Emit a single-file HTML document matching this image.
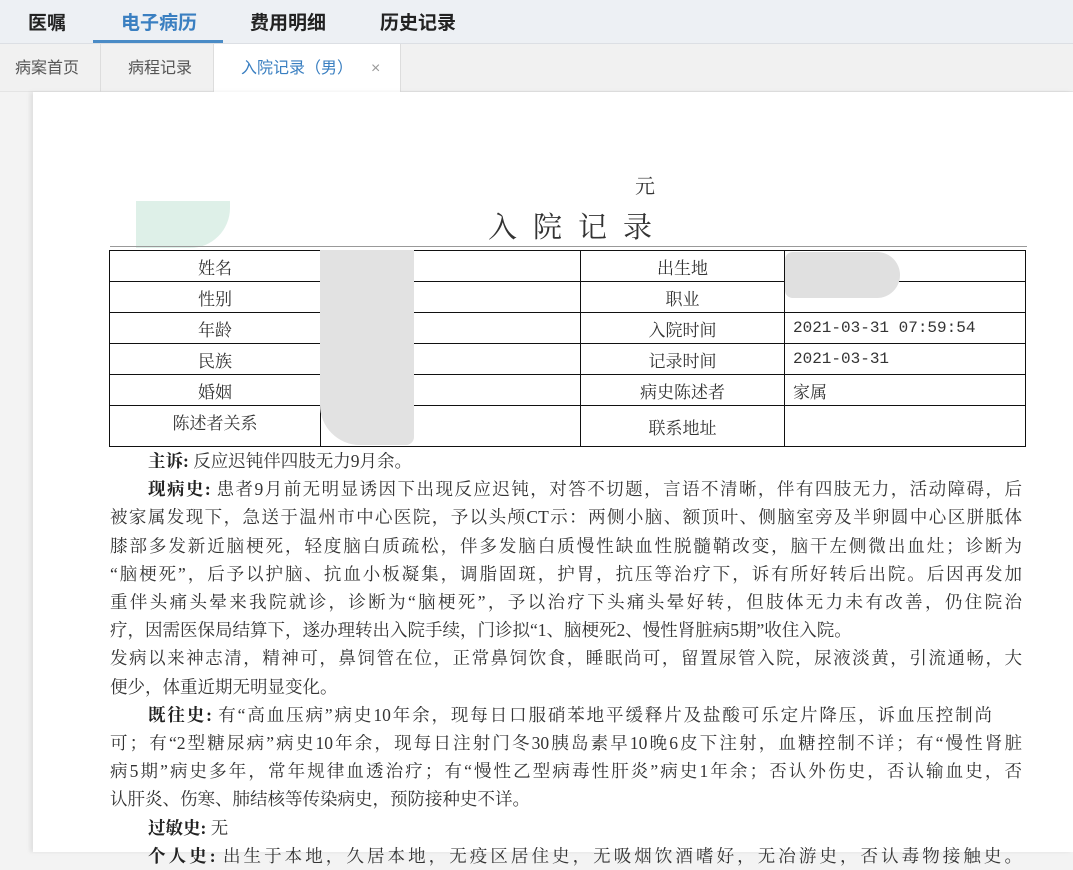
<!DOCTYPE html>
<html><head><meta charset="utf-8"><style>
*{margin:0;padding:0;box-sizing:border-box}
body{width:1073px;height:845px;overflow:hidden;background:#f3f3f3;position:relative;font-family:"Liberation Serif","Noto Serif CJK SC",serif;}
.nav{position:absolute;left:0;top:0;width:1073px;height:44px;background:#edf0f4;border-bottom:1px solid #dcdfe4;font-family:"Liberation Sans","Noto Sans CJK SC",sans-serif;}
.nav span{position:absolute;top:8px;font-size:19px;font-weight:bold;color:#222}
.nav .act{color:#3a7fc1}
.uline{position:absolute;left:93px;top:40px;width:130px;height:3px;background:#4a8bc6}
.tabs{position:absolute;left:0;top:44px;width:1073px;height:48px;background:#f1f1f1;border-bottom:1px solid #e4e4e4;font-family:"Liberation Sans","Noto Sans CJK SC",sans-serif;font-size:16px;color:#555}
.tab{position:absolute;top:0;height:48px;line-height:50px;border-right:1px solid #ddd}
.page{position:absolute;left:33px;top:92px;width:1040px;height:760px;background:#fff;box-shadow:-3px 0 4px rgba(0,0,0,.08)}
table{position:absolute;left:109px;top:250px;border-collapse:collapse;font-size:17px;color:#333}
td{border:1.5px solid #111;height:31px;padding:0}
.c{text-align:center}
.v{padding-left:8px;font-family:"Liberation Mono","Noto Serif CJK SC",monospace;font-size:16px}
.txt{position:absolute;left:110px;width:912px;font-size:17.5px;color:#333;line-height:28.2px}
.txt div{text-align:justify;text-align-last:justify;white-space:nowrap;}
.txt div.l{text-align-last:left}
b{color:#222}
</style></head><body>
<div class="nav"><span style="left:28px">医嘱</span><span class="act" style="left:121px">电子病历</span><span style="left:250px">费用明细</span><span style="left:380px">历史记录</span><div class="uline"></div></div>
<div class="tabs">
<div class="tab" style="left:0;width:101px;padding-left:15px">病案首页</div>
<div class="tab" style="left:101px;width:113px;padding-left:27px">病程记录</div>
<div class="tab" style="left:214px;width:187px;padding-left:27px;background:#fff;color:#3a7fc1">入院记录（男）<span style="color:#999;margin-left:18px">×</span></div>
</div>
<div class="page"></div>
<div style="position:absolute;left:136px;top:201px;width:94px;height:47px;background:#d6ece2;border-radius:0 0 40px 0;opacity:.8"></div>
<div style="position:absolute;left:635px;top:170px;font-size:20px;color:#333">元</div>
<div style="position:absolute;left:488px;top:205px;font-size:29px;letter-spacing:16px;color:#333">入院记录</div>
<div style="position:absolute;left:110px;top:246px;width:917px;height:1px;background:#999"></div>
<table>
<tr><td class="c" style="width:211px">姓名</td><td style="width:260px"></td><td class="c" style="width:204px">出生地</td><td style="width:241px"></td></tr>
<tr><td class="c">性别</td><td></td><td class="c">职业</td><td class="v"></td></tr>
<tr><td class="c">年龄</td><td></td><td class="c">入院时间</td><td class="v">2021-03-31 07:59:54</td></tr>
<tr><td class="c">民族</td><td></td><td class="c">记录时间</td><td class="v">2021-03-31</td></tr>
<tr><td class="c">婚姻</td><td></td><td class="c">病史陈述者</td><td class="v" style="font-family:'Liberation Serif','Noto Serif CJK SC',serif;font-size:17px">家属</td></tr>
<tr><td class="c" style="height:41px;vertical-align:top;padding-top:3px">陈述者关系</td><td></td><td class="c">联系地址</td><td></td></tr>
</table>
<div style="position:absolute;left:320px;top:250px;width:94px;height:195px;background:#e2e2e2;border-radius:0 0 8px 40px"></div>
<div style="position:absolute;left:785px;top:252px;width:115px;height:46px;background:#e0e0e0;border-radius:10px 30px 30px 10px"></div>
<div class="txt" style="top:447px">
<div class="l" style="padding-left:38px"><b>主诉:</b> 反应迟钝伴四肢无力9月余。</div>
<div style="padding-left:38px"><b>现病史:</b> 患者9月前无明显诱因下出现反应迟钝，对答不切题，言语不清晰，伴有四肢无力，活动障碍，后</div>
<div>被家属发现下，急送于温州市中心医院，予以头颅CT示：两侧小脑、额顶叶、侧脑室旁及半卵圆中心区胼胝体</div>
<div>膝部多发新近脑梗死，轻度脑白质疏松，伴多发脑白质慢性缺血性脱髓鞘改变，脑干左侧微出血灶；诊断为</div>
<div>“脑梗死”，后予以护脑、抗血小板凝集，调脂固斑，护胃，抗压等治疗下，诉有所好转后出院。后因再发加</div>
<div>重伴头痛头晕来我院就诊，诊断为“脑梗死”，予以治疗下头痛头晕好转，但肢体无力未有改善，仍住院治</div>
<div class="l">疗，因需医保局结算下，遂办理转出入院手续，门诊拟“1、脑梗死2、慢性肾脏病5期”收住入院。</div>
<div>发病以来神志清，精神可，鼻饲管在位，正常鼻饲饮食，睡眠尚可，留置尿管入院，尿液淡黄，引流通畅，大</div>
<div class="l">便少，体重近期无明显变化。</div>
<div style="padding-left:38px;padding-right:30px"><b>既往史:</b> 有“高血压病”病史10年余，现每日口服硝苯地平缓释片及盐酸可乐定片降压，诉血压控制尚</div>
<div>可；有“2型糖尿病”病史10年余，现每日注射门冬30胰岛素早10晚6皮下注射，血糖控制不详；有“慢性肾脏</div>
<div>病5期”病史多年，常年规律血透治疗；有“慢性乙型病毒性肝炎”病史1年余；否认外伤史，否认输血史，否</div>
<div class="l">认肝炎、伤寒、肺结核等传染病史，预防接种史不详。</div>
<div class="l" style="padding-left:38px"><b>过敏史:</b> 无</div>
<div style="padding-left:38px"><b>个人史:</b> 出生于本地，久居本地，无疫区居住史，无吸烟饮酒嗜好，无冶游史，否认毒物接触史。</div>
</div>
</body></html>
